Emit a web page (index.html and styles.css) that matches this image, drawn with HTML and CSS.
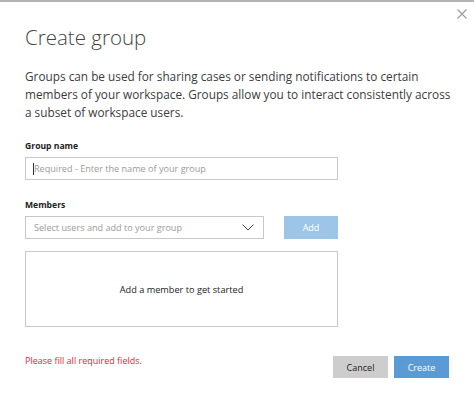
FILE: index.html
```html
<!DOCTYPE html>
<html lang="en">
<head>
    <meta charset="UTF-8">
    <title>Create group</title>
    <link rel="stylesheet" href="styles.css">
</head>
<body>
    <div class="dialog">
        <button class="close-btn" aria-label="Close">
            <svg width="10" height="10" viewBox="0 0 10 10"><path d="M0.5 0.5 L9.5 9.5 M9.5 0.5 L0.5 9.5" stroke="#9a9a9a" stroke-width="1.1" fill="none"/></svg>
        </button>
        <h1>Create group</h1>
        <p class="intro">Groups can be used for sharing cases or sending notifications to certain members of your workspace. Groups allow you to interact consistently across a subset of workspace users.</p>

        <div class="field">
            <label for="group-name">Group name</label>
            <div class="text-input">
                <span class="caret"></span>
                <span class="placeholder">Required - Enter the name of your group</span>
            </div>
        </div>

        <div class="field members">
            <label>Members</label>
            <div class="member-row">
                <div class="select">
                    <span class="placeholder">Select users and add to your group</span>
                    <svg width="12" height="7" viewBox="0 0 12 7"><path d="M0.5 0.5 L6 6 L11.5 0.5" stroke="#444" stroke-width="1" fill="none"/></svg>
                </div>
                <button class="add-btn">Add</button>
            </div>
        </div>

        <div class="member-box">Add a member to get started</div>

        <div class="footer">
            <div class="error">Please fill all required fields.</div>
            <div class="actions">
                <button class="btn cancel">Cancel</button>
                <button class="btn create">Create</button>
            </div>
        </div>
    </div>
</body>
</html>
```

FILE: styles.css
```css
* {
    margin: 0;
    padding: 0;
    box-sizing: border-box;
}

body {
    font-family: "Open Sans", "Noto Sans", sans-serif;
    background-color: #fff;
    color: #333;
}

.dialog {
    position: relative;
    width: 474px;
    height: 404px;
    border-top: 2px solid #b4b4b4;
    padding: 0 25px;
}

.close-btn {
    position: absolute;
    top: 5px;
    right: 7px;
    background: none;
    border: none;
    width: 10px;
    height: 10px;
}

h1 {
    font-weight: 300;
    font-size: 20.5px;
    color: #444;
    padding-top: 20px;
    line-height: 30px;
}

.intro {
    font-size: 11.8px;
    line-height: 18px;
    color: #3c3c3c;
    margin-top: 15px;
    width: 430px;
}

.field {
    margin-top: 19px;
}

.field.members {
    margin-top: 19px;
}

.field label {
    display: block;
    font-size: 8.6px;
    font-weight: 700;
    color: #222;
    margin-bottom: 5px;
}

.text-input {
    display: flex;
    align-items: center;
    width: 313px;
    height: 23px;
    border: 1px solid #c8c8c8;
    padding-left: 7px;
}

.caret {
    width: 1px;
    height: 12px;
    background-color: #333;
}

.placeholder {
    font-size: 9.1px;
    color: #9a9a9a;
}

.member-row {
    display: flex;
    gap: 20px;
}

.select {
    display: flex;
    align-items: center;
    justify-content: space-between;
    width: 239px;
    height: 23px;
    border: 1px solid #c8c8c8;
    padding: 0 9px 0 8px;
}

.add-btn {
    width: 54px;
    height: 23px;
    border: none;
    background-color: #9dc5e8;
    color: #fff;
    font-family: inherit;
    font-size: 9px;
}

.member-box {
    display: flex;
    align-items: center;
    justify-content: center;
    width: 313px;
    height: 76px;
    margin-top: 12px;
    border: 1px solid #c8c8c8;
    font-size: 9.2px;
    color: #222;
}

.footer {
    display: flex;
    justify-content: space-between;
    align-items: flex-start;
    margin-top: 29px;
}

.error {
    font-size: 9px;
    color: #e0293d;
    margin-top: -2px;
}

.actions {
    display: flex;
    gap: 6px;
}

.btn {
    width: 55px;
    height: 22px;
    border: none;
    font-family: inherit;
    font-size: 9px;
}

.cancel {
    background-color: #cdcdcd;
    color: #222;
}

.create {
    background-color: #5b9bd5;
    color: #fff;
}
```
